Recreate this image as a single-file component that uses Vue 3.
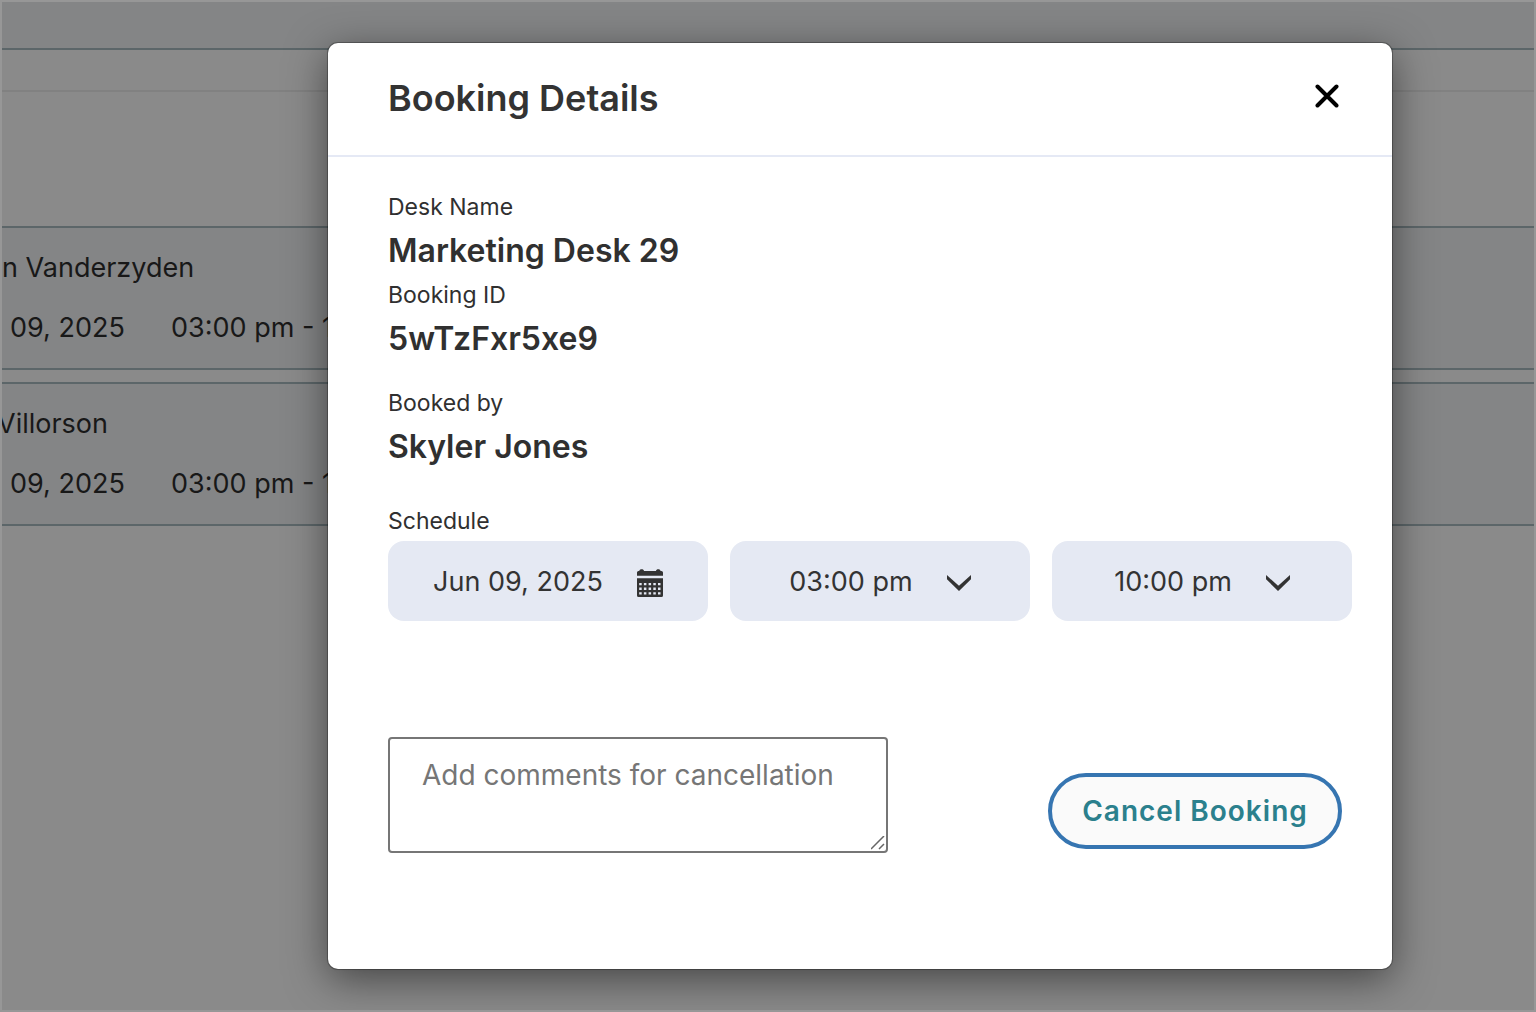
<script setup>
import { ref } from 'vue'

const bookings = [
  { id: 1, name: 'n Vanderzyden', date: '09, 2025', time: '03:00 pm - 10:00 pm' },
  { id: 2, name: 'Villorson', date: '09, 2025', time: '03:00 pm - 10:00 pm', clipped: true },
]

const hours = ['03:00 pm', '10:00 pm']
const start = ref('03:00 pm')
const end = ref('10:00 pm')
const comments = ref('')
</script>

<template>
  <div class="page">
    <div class="backdrop">
      <div class="topbar"></div>
      <div class="subbar"></div>
      <div class="list">
        <div v-for="b in bookings" :key="b.id" class="card">
          <div class="name" :class="{ clipped: b.clipped }">{{ b.name }}</div>
          <div class="when">
            <span class="day">{{ b.date }}</span>
            <span>{{ b.time }}</span>
          </div>
        </div>
      </div>
    </div>

    <div class="overlay">
      <section class="modal" role="dialog" aria-labelledby="modal-title">
        <header class="modal-header">
          <h1 id="modal-title">Booking Details</h1>
          <button class="close" type="button" aria-label="Close">
            <svg width="24" height="24" viewBox="0 0 24 24" fill="none" stroke="#000" stroke-width="4" stroke-linecap="round">
              <path d="M2.500 2.500L21.500 21.500M21.500 2.500L2.500 21.500" />
            </svg>
          </button>
        </header>

        <div class="modal-body">
          <dl class="details">
            <dt>Desk Name</dt>
            <dd>Marketing Desk 29</dd>
            <dt>Booking ID</dt>
            <dd>5wTzFxr5xe9</dd>
            <dt class="spaced">Booked by</dt>
            <dd>Skyler Jones</dd>
          </dl>

          <div id="schedule" class="schedule-label">Schedule</div>
          <div class="schedule" role="group" aria-labelledby="schedule">
            <button class="field" type="button">
              <span>Jun 09, 2025</span>
              <svg class="calendar" width="26" height="28" viewBox="0 0 26 28" fill="#333">
                <path d="M2.3 2C2.3 -.2 7 -.2 7 2H19C19 -.2 23.500 -.2 23.500 2Q26 1.500 26 3.500V6.800H0V3.500Q0 1.500 2.300 2Z" />
                <path fill-rule="evenodd" d="M0 9.200H26V26.500Q26 28 24.500 28H1.500Q0 28 0 26.500ZM2.200 14v2.300h2.500V14ZM6.900 14v2.300h2.500V14ZM11.600 14v2.300h2.500V14ZM16.300 14v2.300h2.500V14ZM21 14v2.300h2.500V14ZM2.200 18.600v2.300h2.500v-2.300ZM6.900 18.600v2.300h2.500v-2.300ZM11.600 18.600v2.300h2.500v-2.300ZM16.300 18.600v2.300h2.500v-2.300ZM21 18.600v2.300h2.500v-2.300ZM2.200 23.200v2.300h2.500v-2.300ZM6.900 23.200v2.300h2.500v-2.300ZM11.600 23.200v2.300h2.500v-2.300ZM16.300 23.200v2.300h2.500v-2.300ZM21 23.200v2.300h2.500v-2.300Z" />
              </svg>
            </button>
            <label class="field">
              <select v-model="start" aria-label="Start time">
                <option v-for="h in hours" :key="h">{{ h }}</option>
              </select>
              <svg class="chevron" width="24" height="16" viewBox="0 0 24 16" fill="#333">
                <path d="M0 0L12 10.800L24 0V4.200L12 16L0 4.200Z" />
              </svg>
            </label>
            <label class="field">
              <select v-model="end" aria-label="End time">
                <option v-for="h in hours" :key="h">{{ h }}</option>
              </select>
              <svg class="chevron" width="24" height="16" viewBox="0 0 24 16" fill="#333">
                <path d="M0 0L12 10.800L24 0V4.200L12 16L0 4.200Z" />
              </svg>
            </label>
          </div>

          <div class="actions">
            <textarea v-model="comments" aria-label="Comments" placeholder="Add comments for cancellation"></textarea>
            <button class="cancel" type="button">Cancel Booking</button>
          </div>
        </div>
      </section>
    </div>
  </div>
</template>

<style>
body {
  margin: 0;
  background: #8a8a8a;
}
</style>

<style scoped>
* {
  box-sizing: border-box;
}

.page {
  position: relative;
  min-height: 100vh;
  border: 2px solid #979797;
  background: #8a8a8a;
  overflow: hidden;
  font-family: Inter, "Liberation Sans", sans-serif;
  font-size: 28px;
  color: #303030;
}

.topbar {
  height: 48px;
  background: #848586;
  border-bottom: 2px solid #5c6669;
}

.subbar {
  height: 42px;
  border-bottom: 2px solid #818181;
}

.list {
  display: flex;
  flex-direction: column;
  gap: 12px;
  padding-top: 134px;
}

.card {
  height: 144px;
  padding-top: 10px;
  background: #848586;
  border: solid #5c6669;
  border-width: 2px 0;
  font-size: 27px;
  line-height: 60px;
  color: #181818;
  white-space: nowrap;
}

.name.clipped {
  margin-left: -5px;
}

.when {
  display: flex;
  padding-left: 8px;
}

.day {
  flex: 0 0 161px;
}

.overlay {
  position: absolute;
  inset: 0;
  display: flex;
  padding: 41px 142px 41px 326px;
}

.modal {
  flex: 1;
  background: #fff;
  border-radius: 10px;
  box-shadow: 0 0 0 1px rgba(0, 0, 0, 0.2), 0 0 1px 1px rgba(0, 0, 0, 0.1), 0 10px 40px rgba(0, 0, 0, 0.5);
}

.modal-header {
  display: flex;
  align-items: center;
  justify-content: space-between;
  height: 114px;
  padding: 0 53px 2px 60px;
  border-bottom: 2px solid #e5e9f5;
}

h1 {
  margin: 0;
  font-size: 36px;
  line-height: 44px;
  font-weight: 600;
  color: #333;
}

button,
select,
textarea {
  font: inherit;
  color: inherit;
}

.close {
  display: flex;
  margin-bottom: 4px;
  padding: 0;
  border: 0;
  background: none;
}

.modal-body {
  padding: 28px 40px 116px 60px;
}

.details {
  margin: 0;
}

dt,
dd {
  margin: 0;
  line-height: 44px;
}

dt {
  font-size: 23px;
}

dd {
  font-size: 32px;
  font-weight: 600;
}

.spaced {
  margin-top: 20px;
}

.schedule-label {
  margin-top: 32px;
  font-size: 23px;
  line-height: 40px;
}

.schedule {
  display: grid;
  grid-template-columns: 320fr 300fr 300fr;
  gap: 22px;
}

.field {
  display: flex;
  align-items: center;
  justify-content: center;
  gap: 34px;
  height: 80px;
  padding: 0;
  border: 0;
  border-radius: 16px;
  background: #e5e9f3;
  font-size: 27px;
  color: #333;
}

.field select {
  appearance: none;
  field-sizing: content;
  padding: 0;
  border: 0;
  background: none;
}

.chevron,
.calendar {
  flex: none;
  margin-top: 3px;
}

.actions {
  display: flex;
  align-items: flex-end;
  justify-content: space-between;
  margin-top: 116px;
}

textarea {
  width: 500px;
  height: 116px;
  padding: 18px 32px;
  border: 2px solid #767676;
  border-radius: 4px;
  background: #fff;
  line-height: 36px;
}

textarea::-webkit-resizer {
  background: url("data:image/svg+xml,%3Csvg xmlns='http://www.w3.org/2000/svg' width='15' height='15'%3E%3Cpath d='M0 13L13 0M8 13L13 8' stroke='%23666' stroke-width='1.5' fill='none'/%3E%3C/svg%3E") no-repeat;
}

textarea::placeholder {
  color: #767676;
  opacity: 1;
}

.cancel {
  width: 294px;
  height: 76px;
  margin: 0 10px 4px 0;
  padding: 0;
  border: 4px solid #3675b1;
  border-radius: 38px;
  background: #fafafa;
  font-weight: 600;
  letter-spacing: 1px;
  color: #2b808d;
  white-space: nowrap;
}
</style>
